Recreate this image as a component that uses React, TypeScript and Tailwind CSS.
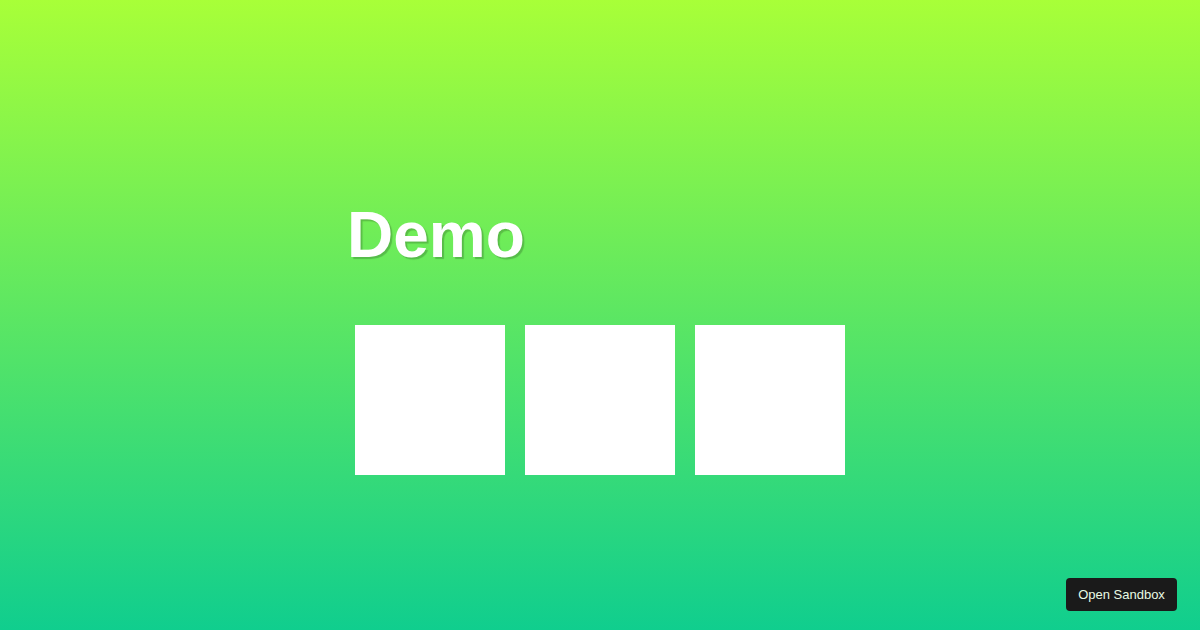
import React from "react";

export default function App() {
  return (
    <div
      className="relative h-[630px] w-[1200px] overflow-hidden bg-[linear-gradient(to_bottom,#a8ff38,#10ce8e)]"
      style={{ fontFamily: '"Liberation Sans", Arial, sans-serif' }}
    >
      <div className="flex flex-col items-center pt-[192px]">
        <div className="w-[510px]">
          <h1 className="ml-[2px] text-[64px] font-bold leading-[86px] text-white [text-shadow:2px_2px_1px_rgba(0,0,0,0.2)]">
            Demo
          </h1>
          <div className="mt-[47px] flex gap-[20px] px-[10px]">
            <div className="h-[150px] w-[150px] bg-white" />
            <div className="h-[150px] w-[150px] bg-white" />
            <div className="h-[150px] w-[150px] bg-white" />
          </div>
        </div>
      </div>
      <button className="absolute bottom-[19px] right-[23px] flex h-[33px] w-[111px] items-center justify-center rounded-[4px] bg-[#1a1a1a] text-[13px] text-[#e8fbe4]">
        Open Sandbox
      </button>
    </div>
  );
}
